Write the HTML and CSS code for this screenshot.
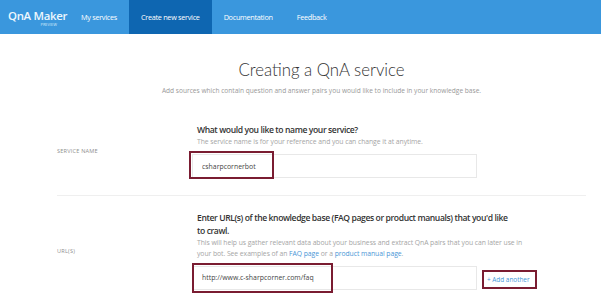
FILE: index.html
```html
<!doctype html>
<html lang="en">
	<head>
		<meta charset="utf-8">
		<title>QnA Maker - Create new service</title>
		<link rel="stylesheet" href="styles.css">
	</head>
	<body>
		<header class="topbar">
			<div class="brand">
				<span class="brand-name">QnA Maker</span>
				<span class="brand-tag">PREVIEW</span>
			</div>
			<nav class="tabs">
				<a href="#">My services</a>
				<a href="#" class="active">Create new service</a>
				<a href="#">Documentation</a>
				<a href="#">Feedback</a>
			</nav>
		</header>

		<main class="page">
			<h1 class="page-title">Creating a QnA service</h1>
			<p class="lead">Add sources which contain question and answer pairs you would like to include in your knowledge base.</p>

			<section class="row first">
				<div class="row-label">SERVICE NAME</div>
				<div class="row-body">
					<h2 class="question">What would you like to name your service?</h2>
					<p class="hint">The service name is for your reference and you can change it at anytime.</p>
					<div class="field">
						<input class="text-input" type="text" value="csharpcornerbot">
						<span class="mark mark-name"></span>
					</div>
				</div>
			</section>

			<section class="row">
				<div class="row-label">URL(S)</div>
				<div class="row-body">
					<h2 class="question">Enter URL(s) of the knowledge base (FAQ pages or product manuals) that you'd like to crawl.</h2>
					<p class="hint">This will help us gather relevant data about your business and extract QnA pairs that you can later use in your bot. See examples of an <a href="#">FAQ page</a> or a <a href="#">product manual page</a>.</p>
					<div class="field">
						<input class="text-input" type="text" value="http://www.c-sharpcorner.com/faq">
						<span class="mark mark-url"></span>
						<a href="#" class="add-link">+ Add another<span class="mark mark-add"></span></a>
					</div>
				</div>
			</section>
		</main>
	</body>
</html>
```

FILE: styles.css
```css
body {
	margin: 0;
	background: #fff;
	font-family: "Open Sans", "DejaVu Sans", sans-serif;
	color: #333;
}

/* top bar */
.topbar {
	display: flex;
	height: 34px;
	background-color: #3a97dd;
	color: #fff;
}
.brand {
	display: flex;
	flex-direction: column;
	padding: 9px 13px 0 8px;
	width: 48px;
}
.brand-name {
	font-size: 11.4px;
	font-weight: 600;
	line-height: 13px;
	letter-spacing: -0.3px;
	white-space: nowrap;
	color: #eef7fd;
}
.brand-tag {
	align-self: flex-end;
	font-size: 4px;
	line-height: 5px;
	color: #d5eafa;
	margin-right: -1px;
}
.tabs { display: flex; }
.tabs a {
	display: flex;
	align-items: center;
	padding: 0 12px;
	font-size: 7.3px;
	color: #fff;
	text-decoration: none;
	letter-spacing: -0.3px;
}
.tabs a.active { background-color: #0e66b1; }

/* content */
.page {
	width: 529px;
	margin-left: 57px;
	padding-top: 24px;
}
.page-title {
	margin: 0;
	text-align: center;
	font-family: Lato, "Open Sans", sans-serif;
	font-size: 16.8px;
	line-height: 24px;
	font-weight: 300;
	color: #333;
}
.lead {
	margin: 4px 0 0;
	text-align: center;
	font-size: 6.6px;
	line-height: 10px;
	color: #999;
}

.row {
	display: grid;
	grid-template-columns: 135px 1fr;
	align-items: center;
	padding: 16px 0 17px;
}
.row.first {
	margin-top: 12px;
	border-bottom: 1px solid #efefef;
}
.row-label {
	font-size: 5.6px;
	color: #8f8f8f;
	letter-spacing: 0.2px;
}
.row-body { padding-right: 56px; }
.question {
	max-width: 318px;
	margin: 0;
	padding-left: 5px;
	font-size: 8.6px;
	line-height: 13px;
	font-weight: 600;
	color: #333;
	letter-spacing: -0.4px;
}
.hint {
	margin: 0;
	padding-left: 5px;
	font-size: 6.8px;
	line-height: 10.5px;
	color: #a5a5a5;
	letter-spacing: -0.05px;
}
.hint a { color: #4a96d6; text-decoration: none; }

.field {
	position: relative;
	display: flex;
	align-items: center;
	gap: 7px;
	margin-top: 6.5px;
}
.text-input {
	box-sizing: border-box;
	width: 285px;
	flex: none;
	height: 24px;
	padding: 0 9px;
	border: 1px solid #e8e8e8;
	font-family: inherit;
	font-size: 6.9px;
	color: #444;
	outline: none;
}
.add-link {
	position: relative;
	margin-top: 4px;
	padding: 2px 3px;
	font-size: 6.4px;
	color: #3f97da;
	text-decoration: none;
	white-space: nowrap;
}

/* annotation boxes drawn over the form */
.mark {
	position: absolute;
	border: 2px solid #7a1c31;
	pointer-events: none;
}
.mark-name { left: -3px; top: -3px; width: 81px; height: 24px; }
.mark-url { left: 0; top: -3px; width: 137px; height: 26px; }
.mark-add { left: -2px; top: -3px; right: -4px; bottom: -3px; }
```
